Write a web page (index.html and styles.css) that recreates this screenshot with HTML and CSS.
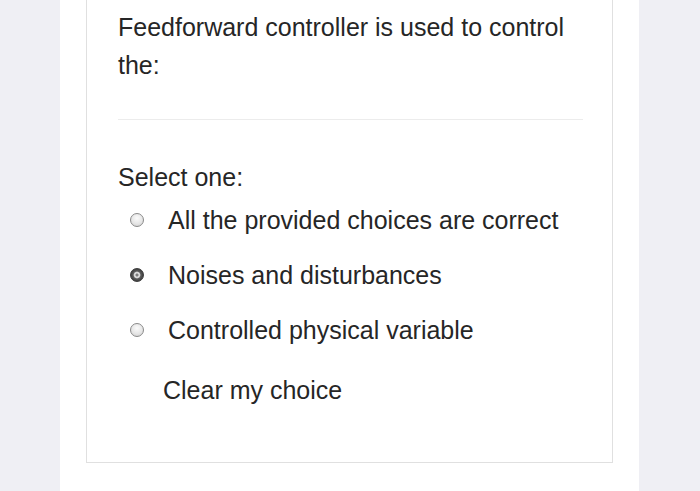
FILE: index.html
```html
<!DOCTYPE html>
<html>
<head>
<meta charset="utf-8">
<link rel="stylesheet" href="styles.css">
</head>
<body>
<div class="page">
  <div class="card">
    <div class="question">Feedforward controller is used to control the:</div>
    <hr class="divider">
    <div class="prompt">Select one:</div>
    <div class="options">
      <div class="option"><span class="radio"></span><span class="label">All the provided choices are correct</span></div>
      <div class="option"><span class="radio checked"></span><span class="label">Noises and disturbances</span></div>
      <div class="option"><span class="radio"></span><span class="label">Controlled physical variable</span></div>
    </div>
    <div class="clear">Clear my choice</div>
  </div>
</div>
</body>
</html>
```
FILE: styles.css
```css
html, body {
  margin: 0;
  padding: 0;
  background: #efeff4;
  height: 100%;
  overflow: hidden;
}
body {
  font-family: "Liberation Sans", Arial, sans-serif;
  color: #262626;
}
.page {
  width: 579px;
  margin-left: 60px;
  height: 491px;
  background: #fff;
  padding: 0 26px;
  box-sizing: border-box;
}
.card {
  height: 463px;
  box-sizing: border-box;
  border: 1px solid #e0e0e0;
  border-top: none;
  padding: 8px 29px 0 31px;
}
.question {
  font-size: 25px;
  line-height: 38px;
  width: 460px;
}
.divider {
  border: none;
  border-top: 1px solid #ececec;
  margin: 35px 0 0 0;
  height: 0;
}
.prompt {
  font-size: 25px;
  line-height: 38px;
  margin-top: 38px;
}
.options {
  margin-top: 5px;
  display: flex;
  flex-direction: column;
  gap: 17px;
}
.option {
  display: flex;
  align-items: center;
  font-size: 25px;
  line-height: 38px;
  padding-left: 12px;
}
.radio {
  width: 14px;
  height: 14px;
  box-sizing: border-box;
  border-radius: 50%;
  border: 1.5px solid #8a8a8a;
  background: radial-gradient(circle at 50% 35%, #fbfbfb 0%, #e6e6e6 55%, #cdcdcd 100%);
  margin-right: 24px;
  flex: none;
}
.radio.checked {
  border-color: #3a3a3a;
  background: radial-gradient(circle at 50% 50%, #6a6a6a 0, #8a8a8a 1.2px, #e4e4e4 2px, #d6d6d6 2.8px, #5e5e5e 3.8px, #404040 6px);
}
.clear {
  font-size: 25px;
  line-height: 38px;
  margin-top: 22px;
  padding-left: 45px;
}
```
